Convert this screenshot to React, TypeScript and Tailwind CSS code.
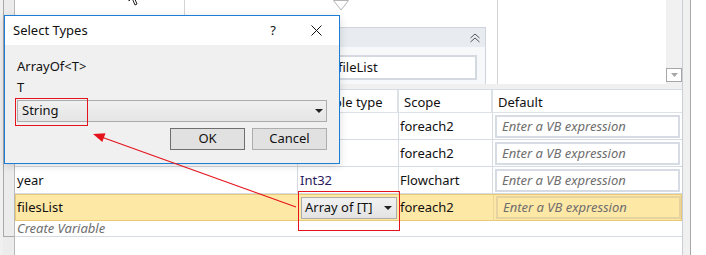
import React from "react";

const ROWS = [
  { name: "", type: "", scope: "foreach2" },
  { name: "", type: "Int32[]", scope: "foreach2" },
  { name: "year", type: "Int32", scope: "Flowchart" },
];

function DefaultBox({ selected }: { selected?: boolean }) {
  return (
    <div
      className={
        selected
          ? "m-[2px] flex h-[23px] items-center border-2 border-[#e6d3a0] bg-[#fee8a6] pl-[5px] italic text-[#6e6e6e]"
          : "m-[2px] flex h-[23px] items-center border-2 border-[#d6dbe4] bg-white pl-[5px] italic text-[#6e6e6e]"
      }
    >
      Enter a VB expression
    </div>
  );
}

function TopArea() {
  return (
    <div className="flex h-[84px]">
      {/* left designer panel */}
      <div className="relative w-[170px] border-r border-[#d4d4d4] bg-white">
        <svg className="absolute left-[113px] top-[-12px]" width="16" height="20" viewBox="0 0 16 20">
          <path d="M1 0 L1 13 L4 10 L7 17 L9 16 L6 9 L10 9 Z" fill="white" stroke="#222" strokeWidth="1" />
        </svg>
      </div>

      {/* middle: flowchart area */}
      <div className="flex w-[312px] flex-col bg-white">
        <div className="flex justify-center">
          <svg width="16" height="11" viewBox="0 0 16 11">
            <path d="M0.5 0.5 L15.5 0.5 L8 10 Z" fill="white" stroke="#b4b4b4" strokeWidth="1" />
          </svg>
        </div>
        <div className="ml-[11px] mt-[16px] flex h-[57px] w-[290px] flex-col border border-b-0 border-[#cfd4dc] bg-[#f7f8fa]">
          <div className="flex h-[19px] items-center justify-end bg-[#e8ebf0] pr-[4px]">
            <svg width="12" height="10" viewBox="0 0 12 10" fill="none" stroke="#555" strokeWidth="1">
              <path d="M1.5 5 L6 1 L10.5 5" />
              <path d="M1.5 9 L6 5 L10.5 9" />
            </svg>
          </div>
          <div className="mx-[8px] mt-[8px] flex h-[25px] items-center border-2 border-[#d3d8e1] bg-white pl-[131px]">
            fileList
          </div>
        </div>
      </div>

      {/* right: properties area with scrollbar */}
      <div className="flex flex-1 border-l border-[#d4d4d4] bg-white">
        <div className="flex-1" />
        <div className="flex w-[16px] flex-col justify-end bg-[#f1f1f1] pb-[2px]">
          <div className="flex h-[14px] items-center justify-center border border-[#a6a6a6] bg-white">
            <svg width="7" height="4" viewBox="0 0 7 4">
              <path d="M0 0 L7 0 L3.5 4 Z" fill="#a6a6a6" />
            </svg>
          </div>
        </div>
      </div>
    </div>
  );
}

function VariablesTable() {
  const head = "flex h-[23px] items-center border-b border-[#dde1e8] bg-white pl-[5px] pt-[3px]";
  return (
    <div className="grid grid-cols-[283px_101px_94px_189px] border-t border-[#d5dae3] bg-white">
      {/* header */}
      <div className={head + " border-r-2"}>Name</div>
      <div className={head + " border-r-2"}>Variable type</div>
      <div className={head + " border-r-2"}>Scope</div>
      <div className={head}>Default</div>

      {ROWS.map((r, i) => (
        <React.Fragment key={i}>
          <div className="flex h-[27px] items-center border-b border-r border-[#d5dae3] pl-[2px] pt-[1px]">{r.name}</div>
          <div className="flex h-[27px] items-center border-b border-r border-[#d5dae3] pl-[2px] pt-[1px] text-[#2a1a5e]">{r.type}</div>
          <div className="flex h-[27px] items-center border-b border-r border-[#d5dae3] pl-[1px] pt-[1px]">{r.scope}</div>
          <div className="h-[27px] border-b border-[#d5dae3]">
            <DefaultBox />
          </div>
        </React.Fragment>
      ))}

      {/* selected row */}
      <div className="col-span-4 grid h-[27px] grid-cols-[283px_101px_94px_189px] border border-[#e7c977] bg-[#fee8a6]">
        <div className="flex items-center border-r border-[#ecd59a] pl-[1px]">filesList</div>
        <div className="flex items-center border-r border-[#ecd59a] pl-[2px]">
          <div className="flex h-[22px] w-[96px] items-center justify-between border border-[#acacac] bg-gradient-to-b from-[#f2f2f2] to-[#e3e3e3] pl-[3px] pr-[4px]">
            <span>Array of [T]</span>
            <svg width="8" height="4" viewBox="0 0 8 4">
              <path d="M0 0 L8 0 L4 4 Z" fill="#222" />
            </svg>
          </div>
        </div>
        <div className="flex items-center border-r border-[#ecd59a]">foreach2</div>
        <div className="-mt-px">
          <DefaultBox selected />
        </div>
      </div>

      <div className="col-span-4 flex h-[16px] items-center border-b border-[#d5dae3] pl-[2px] italic text-[#6e6e6e]">
        Create Variable
      </div>
    </div>
  );
}

function SelectTypesDialog() {
  return (
    <div className="absolute left-[4px] top-[15px] flex h-[149px] w-[336px] flex-col border border-[#1c7fd6] bg-[#f0f0f0] shadow-[0_2px_8px_rgba(0,0,0,0.15)]">
      <div className="flex h-[29px] items-center bg-white pl-[8px]">
        <span className="flex-1 text-[13px] text-[#111]">Select Types</span>
        <span className="mr-[35px] text-[13px] text-[#111]">?</span>
        <svg className="mr-[17px]" width="11" height="11" viewBox="0 0 11 11" stroke="#111" strokeWidth="1">
          <path d="M0.5 0.5 L10.5 10.5 M10.5 0.5 L0.5 10.5" />
        </svg>
      </div>
      <div className="flex flex-col px-[12px] pt-[12px]">
        <div className="h-[18px] leading-[18px]">ArrayOf&lt;T&gt;</div>
        <div className="mt-[3px] h-[18px] leading-[18px]">T</div>
        <div className="mt-[4px] flex h-[22px] items-center justify-between border border-[#acacac] bg-gradient-to-b from-[#f0f0f0] to-[#e5e5e5] pl-[4px] pr-[3px]">
          <span>String</span>
          <svg width="8" height="4" viewBox="0 0 8 4">
            <path d="M0 0 L8 0 L4 4 Z" fill="#222" />
          </svg>
        </div>
        <div className="mt-[6px] flex justify-end gap-[7px]">
          <button className="h-[22px] w-[75px] border border-[#6f6f6f] bg-[#e1e1e1] text-[13px]">OK</button>
          <button className="h-[22px] w-[75px] border border-[#adadad] bg-[#e1e1e1] text-[13px]">Cancel</button>
        </div>
      </div>
    </div>
  );
}

function Annotations() {
  return (
    <>
      <div className="absolute left-[15px] top-[98px] h-[28px] w-[73px] border border-[#e5141c]" />
      <div className="absolute left-[298px] top-[191px] h-[40px] w-[102px] border border-[#e5141c]" />
      <svg className="pointer-events-none absolute left-0 top-0" width="706" height="255">
        <line x1="296" y1="207" x2="100" y2="136.5" stroke="#e5141c" strokeWidth="1.2" />
        <path d="M93 134 L105.5 133.2 L102.3 142 Z" fill="#e5141c" />
      </svg>
    </>
  );
}

export default function App() {
  return (
    <div className="relative h-[255px] w-[706px] overflow-hidden bg-white font-['Noto_Sans','Noto_Sans_CJK_SC',sans-serif] text-[13px] text-[#111]">
      <div className="flex h-full">
        {/* left toolbox edge */}
        <div className="flex w-[15px]">
          <div className="w-[3px] bg-[#f0f0f0]" />
          <div className="flex w-[11px] flex-col">
            <div className="flex h-[236px]">
              <div className="w-px bg-[#a8a8a8]" />
              <div className="flex-1 bg-[#ececec]" />
            </div>
            <div className="flex-1 border-t border-[#a8a8a8] bg-[#ececec]" />
          </div>
          <div className="w-px bg-[#b9b9b9]" />
        </div>

        {/* main designer column */}
        <div className="flex w-[668px] flex-col border-r border-[#c9ced6]">
          <TopArea />
          <div className="h-[5px] bg-[#f0f0f0]" />
          <VariablesTable />
        </div>

        {/* right edge */}
        <div className="w-[7px] bg-[#f0f0f0]" />
        <div className="w-px bg-[#a8a8a8]" />
        <div className="flex-1 bg-white" />
      </div>

      <SelectTypesDialog />
      <Annotations />
    </div>
  );
}
